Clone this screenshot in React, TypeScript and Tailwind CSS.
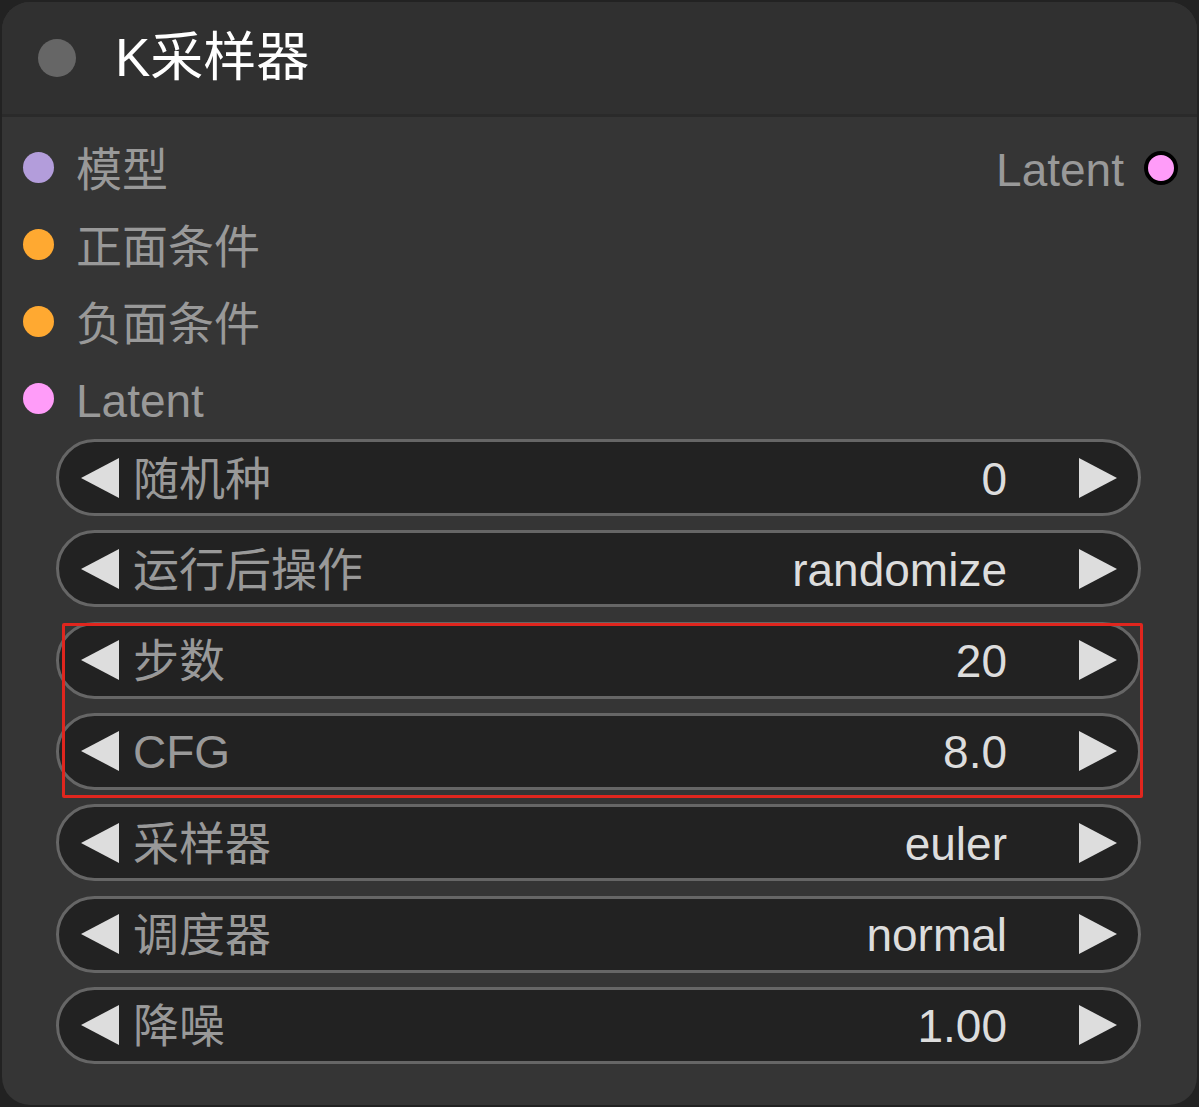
const inputs = [
  { label: "模型", color: "bg-[#b39ddb]" },
  { label: "正面条件", color: "bg-[#ffa931]" },
  { label: "负面条件", color: "bg-[#ffa931]" },
  { label: "Latent", color: "bg-[#ff9cf9]" },
];

const widgets = [
  { label: "随机种", value: "0" },
  { label: "运行后操作", value: "randomize" },
  { label: "步数", value: "20" },
  { label: "CFG", value: "8.0" },
  { label: "采样器", value: "euler" },
  { label: "调度器", value: "normal" },
  { label: "降噪", value: "1.00" },
];

function Arrow({ dir }: { dir: "left" | "right" }) {
  return (
    <svg width="38" height="40" viewBox="0 0 38 40" className="shrink-0">
      <polygon
        points={dir === "left" ? "38,0 38,40 0,20" : "0,0 0,40 38,20"}
        fill="#dddddd"
      />
    </svg>
  );
}

export default function App() {
  return (
    <div
      className="w-[1199px] h-[1107px] bg-[#222222] p-[2px]"
      style={{ fontFamily: '"Liberation Sans", "Noto Sans CJK SC", sans-serif' }}
    >
      <div className="relative h-full bg-[#353535] rounded-[28px] overflow-hidden flex flex-col">
        {/* title */}
        <div className="h-[115px] bg-[#303030] border-b-[3px] border-[#2a2a2a] flex items-center shrink-0">
          <div className="w-[38px] h-[38px] rounded-full bg-[#666666] ml-[36px]" />
          <div className="ml-[39px] text-[53px] text-white leading-none pb-[2px]">K采样器</div>
        </div>

        {/* slots */}
        <div className="pt-[12px] flex">
          <div className="flex-1 flex flex-col">
            {inputs.map((s) => (
              <div key={s.label} className="h-[77px] flex items-center">
                <div className={`w-[31px] h-[31px] rounded-full ${s.color} ml-[21px]`} />
                <span className="ml-[22px] text-[46px] text-[#999999] leading-none pt-[4px]">{s.label}</span>
              </div>
            ))}
          </div>
          <div className="h-[77px] flex items-center pr-[19px]">
            <span className="text-[46px] text-[#999999] leading-none pt-[4px]">Latent</span>
            <div className="ml-[20px] w-[34px] h-[34px] rounded-full bg-[#ff9cf9] border-[4px] border-black" />
          </div>
        </div>

        {/* widgets */}
        <div className="mt-[2px] flex flex-col gap-[14.33px] ml-[54px] mr-[56px]">
          {widgets.map((w) => (
            <div
              key={w.label}
              className="h-[77px] rounded-full border-[3px] border-[#666666] bg-[#222222] flex items-center pl-[22px] pr-[21px]"
            >
              <Arrow dir="left" />
              <span className="ml-[14px] text-[46px] text-[#999999] leading-none pt-[2px]">{w.label}</span>
              <span className="ml-auto text-[46px] text-[#dddddd] leading-none pt-[2px]">{w.value}</span>
              <div className="ml-[72px]">
                <Arrow dir="right" />
              </div>
            </div>
          ))}
        </div>

        {/* selection highlight */}
        <div className="absolute left-[60px] top-[621px] w-[1081px] h-[175px] border-[3px] border-[#e0261e] rounded-[2px] pointer-events-none" />
      </div>
    </div>
  );
}
